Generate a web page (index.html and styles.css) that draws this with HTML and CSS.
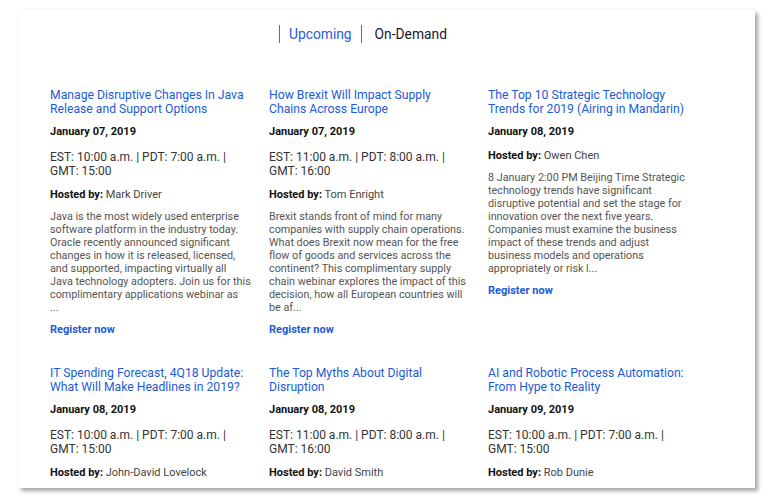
FILE: index.html
```html
<!DOCTYPE html>
<html lang="en">
<head>
<meta charset="utf-8">
<title>Webinars</title>
<link rel="stylesheet" href="styles.css">
</head>
<body>
<div class="page">
<div class="card">
  <nav class="tabs">
    <a class="tab active">Upcoming</a>
    <a class="tab">On-Demand</a>
  </nav>
  <div class="grid">
    <article class="item">
      <h3 class="title">Manage Disruptive Changes In Java Release and Support Options</h3>
      <p class="date">January 07, 2019</p>
      <p class="time">EST: 10:00 a.m. | PDT: 7:00 a.m. | GMT: 15:00</p>
      <p class="host"><b>Hosted by:</b> Mark Driver</p>
      <p class="desc">Java is the most widely used enterprise software platform in the industry today. Oracle recently announced significant changes in how it is released, licensed, and supported, impacting virtually all<br><span class="nw">Java technology adopters. Join us for this</span> complimentary applications webinar as<br>...</p>
      <a class="reg">Register now</a>
    </article>
    <article class="item">
      <h3 class="title">How Brexit Will Impact Supply Chains Across Europe</h3>
      <p class="date">January 07, 2019</p>
      <p class="time">EST: 11:00 a.m. | PDT: 8:00 a.m. | GMT: 16:00</p>
      <p class="host"><b>Hosted by:</b> Tom Enright</p>
      <p class="desc">Brexit stands front of mind for many companies with supply chain operations. What does Brexit now mean for the free flow of goods and services across the continent? This complimentary supply chain webinar explores the impact of this decision, how all European countries will be af...</p>
      <a class="reg">Register now</a>
    </article>
    <article class="item">
      <h3 class="title">The Top 10 Strategic Technology Trends for 2019 (Airing in Mandarin)</h3>
      <p class="date">January 08, 2019</p>
      <p class="host nodate"><b>Hosted by:</b> Owen Chen</p>
      <p class="desc">8 January 2:00 PM Beijing Time Strategic technology trends have significant disruptive potential and set the stage for innovation over the next five years. Companies must examine the business impact of these trends and adjust business models and operations appropriately or risk l...</p>
      <a class="reg">Register now</a>
    </article>
    <article class="item">
      <h3 class="title">IT Spending Forecast, 4Q18 Update: What Will Make Headlines in 2019?</h3>
      <p class="date">January 08, 2019</p>
      <p class="time">EST: 10:00 a.m. | PDT: 7:00 a.m. | GMT: 15:00</p>
      <p class="host"><b>Hosted by:</b> John-David Lovelock</p>
    </article>
    <article class="item">
      <h3 class="title">The Top Myths About Digital Disruption</h3>
      <p class="date">January 08, 2019</p>
      <p class="time">EST: 11:00 a.m. | PDT: 8:00 a.m. | GMT: 16:00</p>
      <p class="host"><b>Hosted by:</b> David Smith</p>
    </article>
    <article class="item">
      <h3 class="title">AI and Robotic Process Automation: From Hype to Reality</h3>
      <p class="date">January 09, 2019</p>
      <p class="time">EST: 10:00 a.m. | PDT: 7:00 a.m. | GMT: 15:00</p>
      <p class="host"><b>Hosted by:</b> Rob Dunie</p>
    </article>
  </div>
</div>
</div>
</body>
</html>
```

FILE: styles.css
```css
html, body {
  margin: 0;
  padding: 0;
  background: #ffffff;
}
body {
  font-family: Roboto, "Liberation Sans", Arial, sans-serif;
  color: #222;
}
.page {
  height: 504px;
  padding-top: 10px;
  box-sizing: border-box;
  overflow: hidden;
}
.card {
  margin: 0 15px 0 18px;
  height: 478px;
  overflow: hidden;
  background: #fff;
  box-shadow: 3px 3px 4px rgba(0,0,0,0.35), 0 -1px 2px rgba(0,0,0,0.04);
  box-sizing: border-box;
  padding: 15px 0 0 32px;
}
.tabs {
  display: flex;
  padding-left: 229px;
  height: 18px;
}
.tab {
  font-size: 13.8px;
  line-height: 18px;
  padding: 0 14px 0 0;
  color: #1a1a2e;
}
.tab.active {
  color: #2a5bd7;
  padding: 0 9px 0 9px;
  margin-right: 13px;
  border-left: 1.5px solid #3a6ee0;
  border-right: 1.5px solid #3a6ee0;
}
.grid {
  display: grid;
  grid-template-columns: repeat(3, 198px);
  column-gap: 21px;
  row-gap: 30px;
  margin-top: 45px;
}
.item p { margin: 0; }
.title {
  margin: 0;
  font-size: 12.2px;
  line-height: 14px;
  font-weight: 400;
  color: #1d5bd8;
}
.date {
  margin-top: 9px !important;
  font-size: 11px;
  line-height: 14px;
  font-weight: 700;
  color: #111;
}
.time {
  margin-top: 11px !important;
  font-size: 12px;
  line-height: 14px;
  color: #333;
}
.host {
  margin-top: 10px !important;
  font-size: 11px;
  line-height: 14px;
  color: #444;
}
.host b { color: #111; }
.host.nodate { margin-top: 10px !important; }
.desc {
  margin-top: 8px !important;
  font-size: 10.8px;
  line-height: 13px;
  color: #555;
}
.nw { white-space: nowrap; }
.reg {
  display: block;
  margin-top: 9px;
  font-size: 11px;
  line-height: 13px;
  font-weight: 700;
  color: #1d5bd8;
}
```
